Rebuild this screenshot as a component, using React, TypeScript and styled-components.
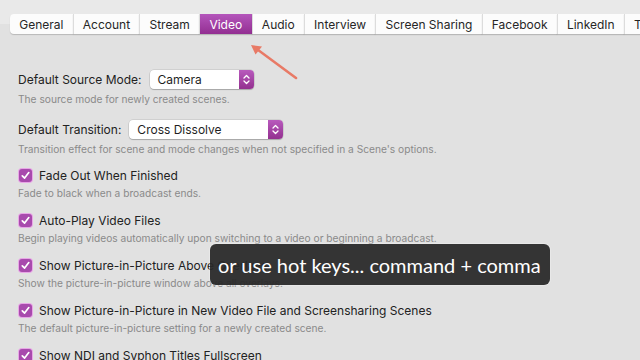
import styled, { createGlobalStyle } from "styled-components";

const GlobalStyle = createGlobalStyle`
  html, body {
    margin: 0;
    padding: 0;
    width: 640px;
    height: 360px;
    overflow: hidden;
  }
  body {
    font-family: Inter, "Liberation Sans", sans-serif;
    background: #e2e2e2;
  }
`;

const Window = styled.div`
  position: relative;
  width: 640px;
  height: 360px;
  overflow: hidden;
  background: linear-gradient(#e9e9e9 0, #e9e9e9 24px, #e1e1e1 24px);
`;

const TabBar = styled.div`
  display: flex;
  padding: 14px 0 0 10px;
  white-space: nowrap;
`;

const Tab = styled.div<{ active?: boolean }>`
  flex: none;
  height: 20px;
  display: flex;
  align-items: center;
  padding: 0 ${(p) => (p.active ? 9.5 : 9.2)}px;
  font-size: 12px;
  color: ${(p) => (p.active ? "#fff" : "#262626")};
  background: ${(p) =>
    p.active ? "linear-gradient(#b455bb, #932f92)" : "#fcfcfc"};
  border-left: 1px solid #dcdcdc;
  box-shadow: 0 1px 1px rgba(0, 0, 0, 0.18);

  &:first-child {
    border-left: none;
    border-radius: 4px 0 0 4px;
  }
`;

const Content = styled.div`
  display: flex;
  flex-direction: column;
  padding: 34px 0 0 18px;
`;

const Group = styled.div<{ gap: number }>`
  display: flex;
  flex-direction: column;
  margin-bottom: ${(p) => p.gap}px;
`;

const Row = styled.div<{ h: number }>`
  display: flex;
  align-items: center;
  gap: 8px;
  height: ${(p) => p.h}px;
  font-size: 12px;
  color: #222;
`;

const Help = styled.div`
  font-size: 10.2px;
  line-height: 13px;
  color: #8a8a8a;
  margin-top: 3px;
  white-space: nowrap;
`;

const Select = styled.div<{ w: number }>`
  width: ${(p) => p.w}px;
  height: 19px;
  display: flex;
  align-items: center;
  justify-content: space-between;
  background: #fff;
  border-radius: 4px;
  box-shadow: 0 0 0 0.5px rgba(0, 0, 0, 0.15), 0 1px 1px rgba(0, 0, 0, 0.2);
  font-size: 12px;
  color: #1f1f1f;
  padding-left: 8px;
  box-sizing: border-box;
`;

const Stepper = styled.div`
  width: 15px;
  height: 19px;
  border-radius: 0 4px 4px 0;
  background: linear-gradient(#b85abd, #93308f);
  display: flex;
  align-items: center;
  justify-content: center;
`;

const Check = styled.div`
  width: 13px;
  height: 13px;
  border-radius: 3px;
  background: #a84aad;
  box-shadow: 0 0 0 1px #e7a6e6;
  display: flex;
  align-items: center;
  justify-content: center;
  margin-left: 1px;
  margin-right: -1px;
`;

const Toast = styled.div`
  position: absolute;
  left: 210px;
  top: 244px;
  width: 340px;
  height: 41px;
  box-sizing: border-box;
  border-radius: 6px;
  background: rgba(40, 40, 40, 0.94);
  box-shadow: 0 0 0 1px rgba(255, 255, 255, 0.25);
  color: #fff;
  font-family: Lato, "Open Sans", sans-serif;
  font-size: 20px;
  white-space: nowrap;
  display: flex;
  align-items: center;
  padding-left: 8px;
`;

const Arrow = styled.svg`
  position: absolute;
  left: 240px;
  top: 36px;
`;

const tabs = [
  "General",
  "Account",
  "Stream",
  "Video",
  "Audio",
  "Interview",
  "Screen Sharing",
  "Facebook",
  "LinkedIn",
  "Twitter",
];

const checks = [
  {
    title: "Fade Out When Finished",
    help: "Fade to black when a broadcast ends.",
  },
  {
    title: "Auto-Play Video Files",
    help: "Begin playing videos automatically upon switching to a video or beginning a broadcast.",
  },
  {
    title: "Show Picture-in-Picture Above Overlays",
    help: "Show the picture-in-picture window above all overlays.",
  },
  {
    title: "Show Picture-in-Picture in New Video File and Screensharing Scenes",
    help: "The default picture-in-picture setting for a newly created scene.",
  },
  {
    title: "Show NDI and Syphon Titles Fullscreen",
    help: "Show titles fullscreen on NDI and Syphon outputs.",
  },
];

const Chevrons = () => (
  <svg width="9" height="13" viewBox="0 0 9 13">
    <path
      d="M2 5 L4.5 2.5 L7 5 M2 8 L4.5 10.5 L7 8"
      stroke="#fff"
      strokeWidth="1.3"
      fill="none"
      strokeLinecap="round"
      strokeLinejoin="round"
    />
  </svg>
);

const Tick = () => (
  <svg width="11" height="11" viewBox="0 0 11 11">
    <path
      d="M2.3 5.8 L4.6 8.1 L8.8 2.6"
      stroke="#fff"
      strokeWidth="1.7"
      fill="none"
      strokeLinecap="round"
      strokeLinejoin="round"
    />
  </svg>
);

const App = () => {
  return (
    <Window>
      <GlobalStyle />
      <TabBar>
        {tabs.map((t) => (
          <Tab key={t} active={t === "Video"}>
            {t}
          </Tab>
        ))}
      </TabBar>
      <Content>
        <Group gap={12}>
          <Row h={22}>
            Default Source Mode:
            <Select w={104}>
              Camera
              <Stepper>
                <Chevrons />
              </Stepper>
            </Select>
          </Row>
          <Help>The source mode for newly created scenes.</Help>
        </Group>
        <Group gap={10}>
          <Row h={22}>
            Default Transition:
            <Select w={154}>
              Cross Dissolve
              <Stepper>
                <Chevrons />
              </Stepper>
            </Select>
          </Row>
          <Help>
            Transition effect for scene and mode changes when not specified in
            a Scene's options.
          </Help>
        </Group>
        {checks.map((c) => (
          <Group key={c.title} gap={11}>
            <Row h={18}>
              <Check>
                <Tick />
              </Check>
              {c.title}
            </Row>
            <Help>{c.help}</Help>
          </Group>
        ))}
      </Content>
      <Arrow width="70" height="50" viewBox="0 0 70 50">
        <path
          d="M56 42 L14 11"
          stroke="#e87a66"
          strokeWidth="2.6"
          strokeLinecap="round"
        />
        <path d="M11 9 L22 10.5 L15.5 18.5 Z" fill="#e87a66" />
      </Arrow>
      <Toast>or use hot keys... command + comma</Toast>
    </Window>
  );
};

export default App;
